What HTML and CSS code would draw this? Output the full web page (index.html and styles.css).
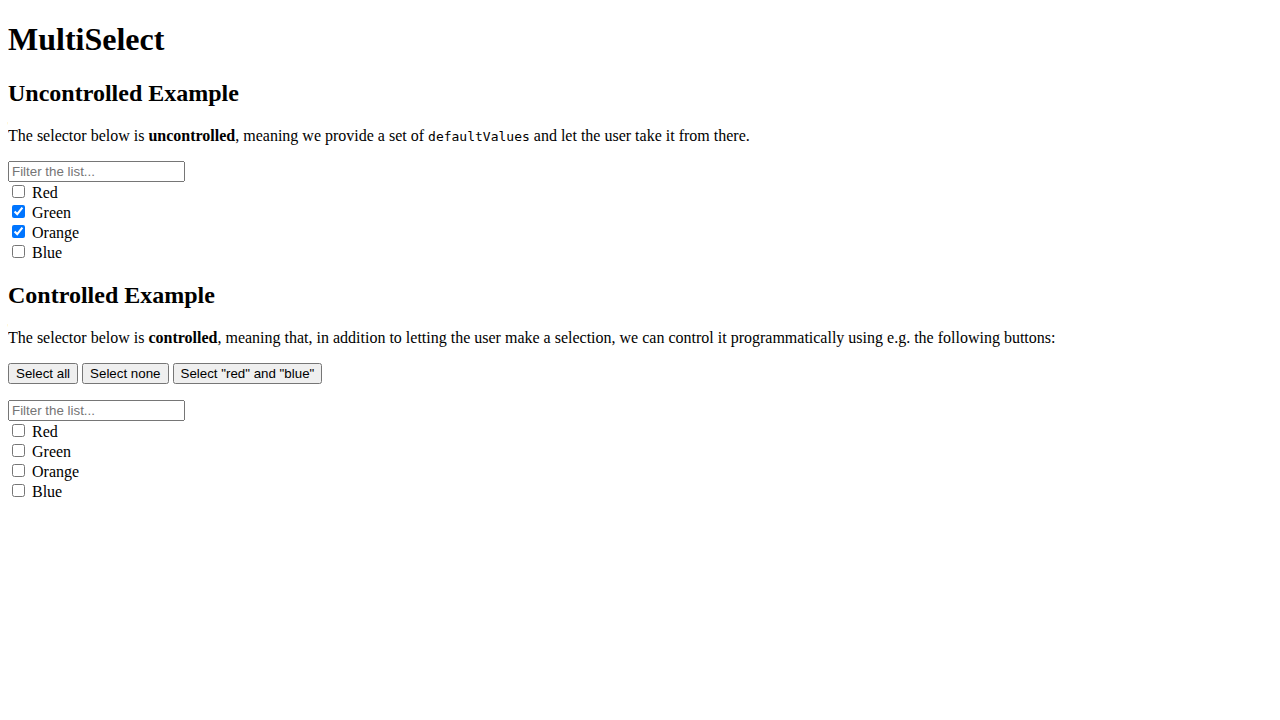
FILE: index.html
```html
<!DOCTYPE html>
<html>
<head>
<meta charset="utf-8">
<title>MultiSelect</title>
<link rel="stylesheet" href="styles.css">
</head>
<body class="page">
<h1 class="title">MultiSelect</h1>
<h2 class="section-title">Uncontrolled Example</h2>
<p class="text">The selector below is <b>uncontrolled</b>, meaning we provide a set of <code class="code">defaultValues</code> and let the user take it from there.</p>
<div class="multiselect">
  <input class="filter" type="text" placeholder="Filter the list...">
  <div class="option"><label><input class="check" type="checkbox"> Red</label></div>
  <div class="option"><label><input class="check" type="checkbox" checked> Green</label></div>
  <div class="option"><label><input class="check" type="checkbox" checked> Orange</label></div>
  <div class="option"><label><input class="check" type="checkbox"> Blue</label></div>
</div>
<h2 class="section-title">Controlled Example</h2>
<p class="text">The selector below is <b>controlled</b>, meaning that, in addition to letting the user make a selection, we can control it programmatically using e.g. the following buttons:</p>
<p class="text buttons">
  <button class="btn">Select all</button>
  <button class="btn">Select none</button>
  <button class="btn">Select "red" and "blue"</button>
</p>
<div class="multiselect">
  <input class="filter" type="text" placeholder="Filter the list...">
  <div class="option"><label><input class="check" type="checkbox"> Red</label></div>
  <div class="option"><label><input class="check" type="checkbox"> Green</label></div>
  <div class="option"><label><input class="check" type="checkbox"> Orange</label></div>
  <div class="option"><label><input class="check" type="checkbox"> Blue</label></div>
</div>
</body>
</html>
```
FILE: styles.css
```css
.page {
  margin: 8px;
  font-family: "Liberation Serif", "Times New Roman", serif;
  font-size: 16px;
  color: #000;
  background: #fff;
}
.title {
  font-size: 32px;
  font-weight: bold;
  margin: 13.44px 0 21.44px;
}
.section-title {
  font-size: 24px;
  font-weight: bold;
  margin: 19.92px 0;
}
.text {
  margin: 16px 0;
}
.code {
  font-family: "DejaVu Sans Mono", monospace;
  font-size: 13px;
}
.filter {
  box-sizing: border-box;
  width: 177px;
  height: 21px;
  font-family: "Liberation Sans", Arial, sans-serif;
  font-size: 13.333px;
}
.check {
  margin: 3px 3px 3px 4px;
}
.btn {
  font-family: "Liberation Sans", Arial, sans-serif;
  font-size: 13.333px;
}
```
